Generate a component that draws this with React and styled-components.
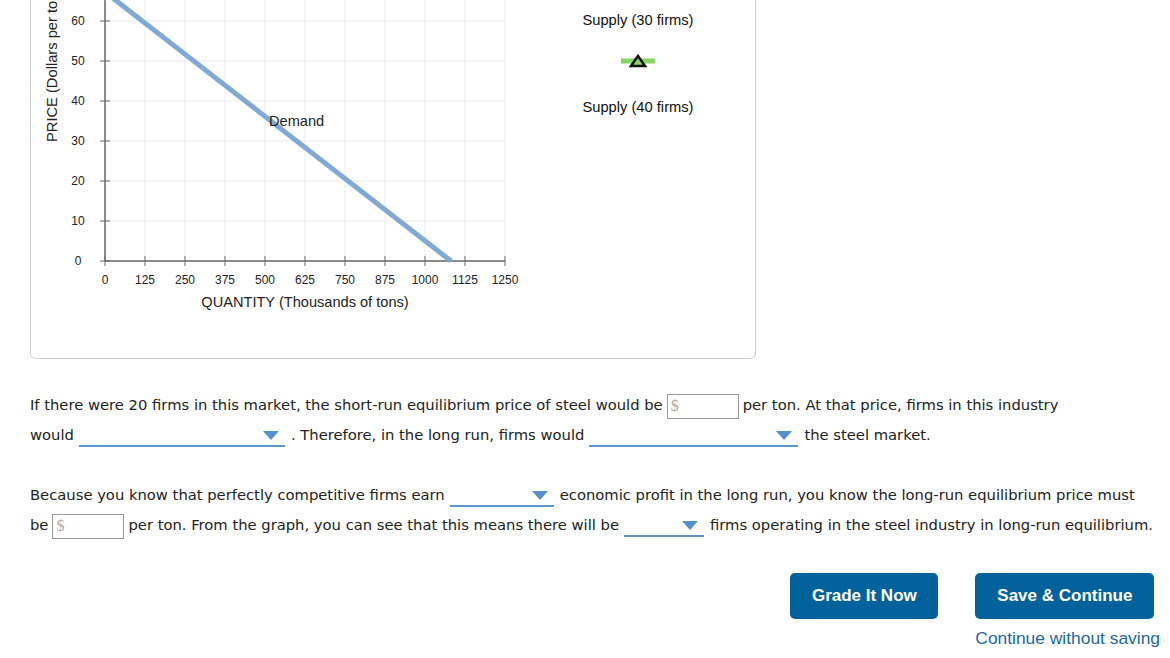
import styled, { createGlobalStyle } from 'styled-components';

const GlobalStyle = createGlobalStyle`
  body {
    margin: 0;
    background: #ffffff;
    overflow: hidden;
  }
`

const Page = styled.div`
  width: 1170px;
  padding: 0 10px 0 30px;
  box-sizing: border-box;
  color: #222;
`

const GraphPanel = styled.div`
  margin-top: -40px;
  width: 726px;
  height: 399px;
  box-sizing: border-box;
  border: 1px solid #cfcfcf;
  border-radius: 0 0 6px 6px;
  display: flex;
`

const Legend = styled.div`
  width: 150px;
  padding-top: 51px;
  display: flex;
  flex-direction: column;
  align-items: center;
  font-family: "Liberation Sans", Arial, sans-serif;
  font-size: 14.7px;
  line-height: 16px;
  color: #111;
`

const LegendIcon = styled.svg`
  margin: ${(p) => p.$gap}px 0;
  display: block;
`

const Question = styled.div`
  margin-top: 31px;
  font-family: "DejaVu Sans", Verdana, sans-serif;
  font-size: 14.75px;
  line-height: 30px;
`

const Para = styled.p`
  margin: 0 0 30px;
`

const Keep = styled.span`
  white-space: nowrap;
`

const PriceBox = styled.span`
  display: inline-block;
  vertical-align: middle;
  width: 72px;
  height: 25px;
  box-sizing: border-box;
  border: 1px solid #9a9a9a;
  margin: 0 4px;
  padding-left: 3px;
  line-height: 22px;
  color: #aaa;
  font-family: "Liberation Serif", serif;
  font-size: 16px;
`

const Drop = styled.span`
  display: inline-block;
  vertical-align: middle;
  position: relative;
  width: ${(p) => p.$w}px;
  height: 19px;
  margin: 0 6px 0 5px;
  border-bottom: 2px solid #5b96cf;
  &::after {
    content: '';
    position: absolute;
    right: 6px;
    top: 5px;
    border-left: 8px solid transparent;
    border-right: 8px solid transparent;
    border-top: 9px solid #5591cc;
  }
`

const Actions = styled.div`
  display: flex;
  justify-content: flex-end;
  gap: 37px;
  margin-top: 33px;
  font-family: "Liberation Sans", Arial, sans-serif;
`

const Column = styled.div`
  display: flex;
  flex-direction: column;
  align-items: flex-start;
`

const Button = styled.button`
  width: ${(p) => p.$w}px;
  height: 46px;
  border: none;
  border-radius: 5px;
  background: #03619b;
  color: #fff;
  font-family: "Liberation Sans", Arial, sans-serif;
  font-weight: bold;
  font-size: 17px;
`

const Link = styled.a`
  margin-top: 9px;
  color: #1b67a3;
  font-size: 17.4px;
  line-height: 20px;
  text-decoration: none;
`

const yTicks = [0, 10, 20, 30, 40, 50, 60, 70]
const xTicks = [0, 125, 250, 375, 500, 625, 750, 875, 1000, 1125, 1250]
const X0 = 105
const Y0 = 261

const Chart = () => (
  <svg width="532" height="360" viewBox="31 -39 532 360" fontFamily="Liberation Sans, Arial, sans-serif">
    {yTicks.slice(1).map((v, i) => (
      <line key={'h' + v} x1={X0} x2={505} y1={Y0 - (i + 1) * 40} y2={Y0 - (i + 1) * 40} stroke="#ebebeb" strokeWidth="1" />
    ))}
    {xTicks.slice(1).map((v, i) => (
      <line key={'v' + v} x1={X0 + (i + 1) * 40} x2={X0 + (i + 1) * 40} y1={-39} y2={Y0} stroke="#ebebeb" strokeWidth="1" />
    ))}
    <line x1={X0} x2={X0} y1={-39} y2={Y0} stroke="#666" strokeWidth="1.5" />
    <line x1={X0} x2={505} y1={Y0} y2={Y0} stroke="#666" strokeWidth="1.5" />
    {yTicks.map((v, i) => (
      <g key={'yt' + v}>
        <line x1={100} x2={110} y1={Y0 - i * 40} y2={Y0 - i * 40} stroke="#666" strokeWidth="1" />
        <text x={78} y={Y0 - i * 40 + 4} fontSize="12" textAnchor="middle" fill="#222">{v}</text>
      </g>
    ))}
    {xTicks.map((v, i) => (
      <g key={'xt' + v}>
        <line x1={X0 + i * 40} x2={X0 + i * 40} y1={Y0 - 5} y2={Y0 + 5} stroke="#666" strokeWidth="1" />
        <text x={X0 + i * 40} y={Y0 + 23} fontSize="12" textAnchor="middle" fill="#222">{v}</text>
      </g>
    ))}
    <text x={57} y={142} fontSize="14.7" fill="#222" transform="rotate(-90 57 142)">PRICE (Dollars per ton)</text>
    <text x={305} y={307} fontSize="14.6" textAnchor="middle" fill="#222">QUANTITY (Thousands of tons)</text>
    <line x1={105} y1={-8} x2={451} y2={261} stroke="#80a9d5" strokeWidth="5" />
    <text x={269} y={126} fontSize="14.6" fill="#222">Demand</text>
  </svg>
)

const App = () => {
  return (
    <>
      <GlobalStyle />
      <Page>
        <GraphPanel>
          <Chart />
          <Legend>
            <span>Supply (30 firms)</span>
            <LegendIcon $gap={26} width="34" height="14" viewBox="0 0 34 14">
              <rect x="0" y="4.5" width="34" height="5" fill="#86d466" />
              <polygon points="17,2 24,12 10,12" fill="#86d466" stroke="#111" strokeWidth="2.5" strokeLinejoin="miter" />
            </LegendIcon>
            <span style={{ marginTop: 5 }}>Supply (40 firms)</span>
          </Legend>
        </GraphPanel>
        <Question>
          <Para>
            If there were 20 firms in this market, the short-run equilibrium price of steel would be
            <PriceBox>$</PriceBox>
            per ton. At that price, firms in this industry{' '}
            <Keep>would<Drop $w={206} /></Keep>
            . Therefore, in the long run, firms would
            <Drop $w={209} />
            the steel market.
          </Para>
          <Para>
            Because you know that perfectly competitive firms earn
            <Drop $w={104} />
            economic profit in the long run, you know the long-run equilibrium price must{' '}
            <Keep>be<PriceBox>$</PriceBox></Keep>
            per ton. From the graph, you can see that this means there will be
            <Drop $w={80} />
            firms operating in the steel industry in long-run equilibrium.
          </Para>
        </Question>
        <Actions>
          <Button $w={148}>Grade It Now</Button>
          <Column>
            <Button $w={179}>Save &amp; Continue</Button>
            <Link href="#">Continue without saving</Link>
          </Column>
        </Actions>
      </Page>
    </>
  )
}

export default App;
